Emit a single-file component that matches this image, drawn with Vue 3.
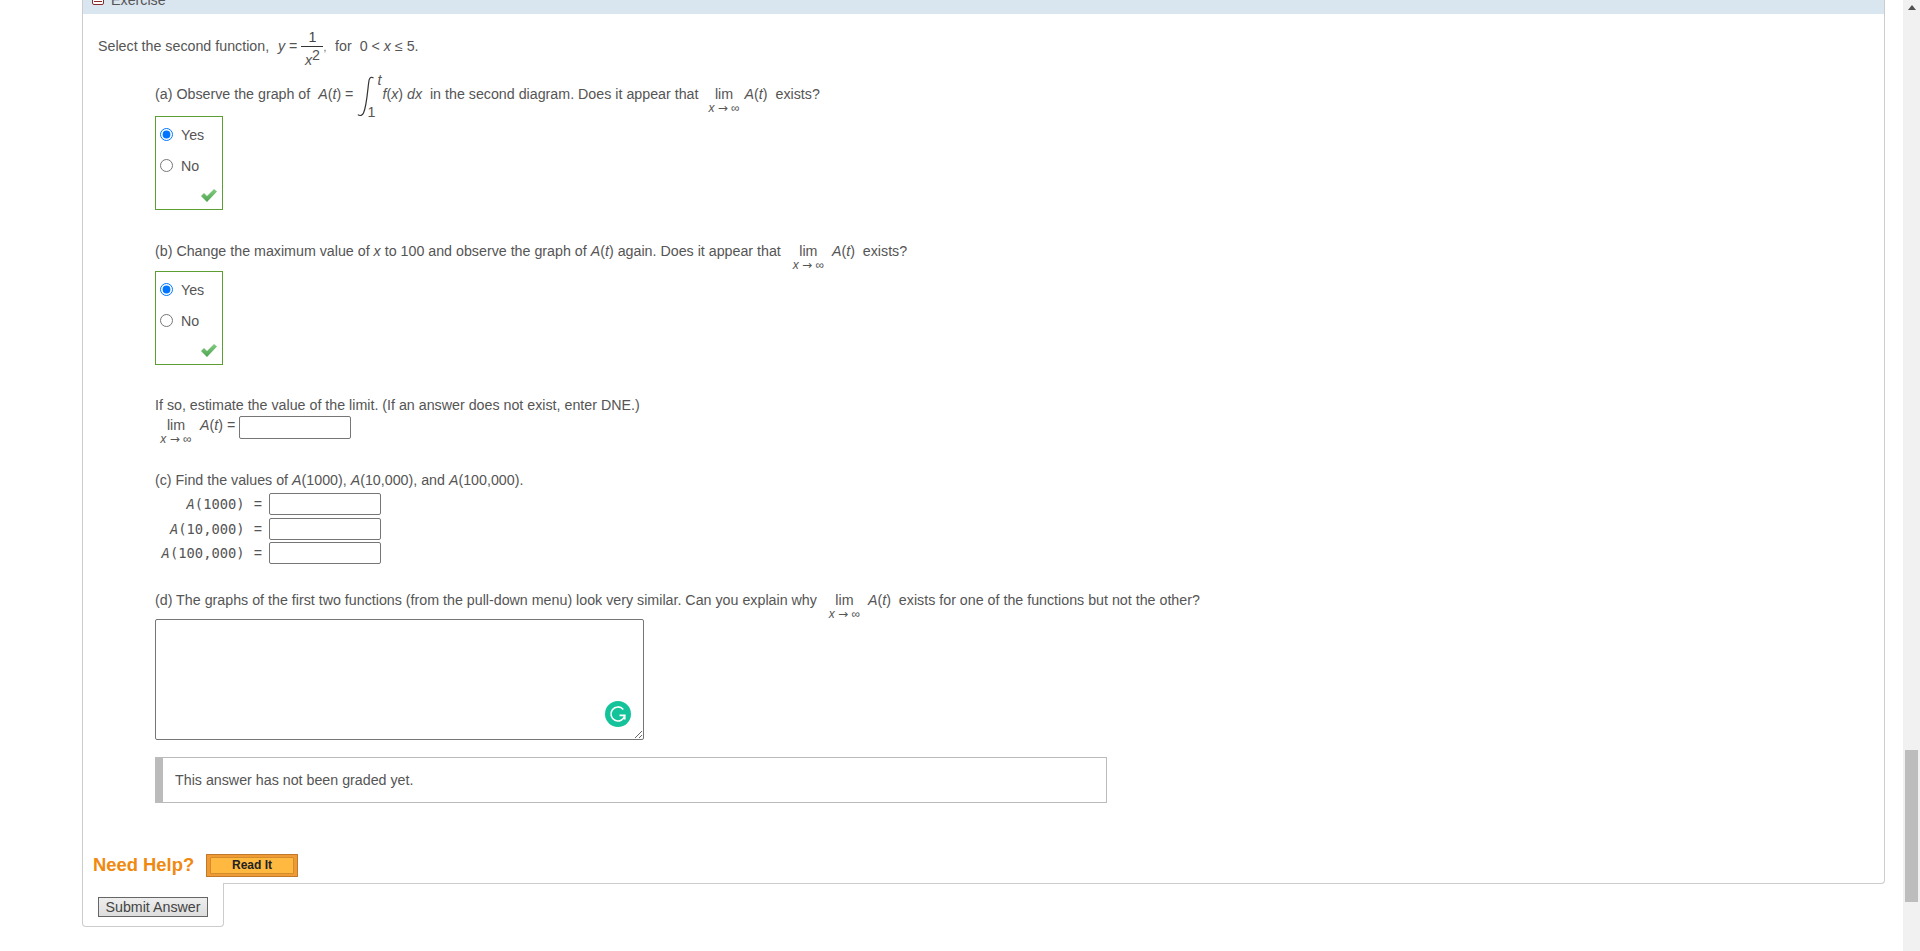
<script setup>
const rows = [
  { label: 'A', arg: '(1000)' },
  { label: 'A', arg: '(10,000)' },
  { label: 'A', arg: '(100,000)' }
]
</script>

<template>
  <div class="shell">
    <main class="page">
      <section class="panel">
        <header class="head">
          <span class="toggle"><i></i></span>
          <span class="head-title">Exercise</span>
        </header>

        <div class="body">
          <p class="intro">
            Select the second function, &nbsp;<em>y</em> =
            <span class="frac"><span class="num">1</span><span class="den"><em>x</em><sup>2</sup></span></span><span class="comma">,</span>
            &nbsp;for &nbsp;0 &lt; <em>x</em> ≤ 5.
          </p>

          <div class="parts">
            <p class="line line-a">
              (a) Observe the graph of &nbsp;<em>A</em>(<em>t</em>) =
              <span class="integral">
                <svg class="int-sign" viewBox="0 0 17 41" width="17" height="41"><path d="M16.5 2.2C15 .6 13 1 12.2 3.6 11 8 10 30 6.5 37 5.400 39.500 3 40.300.8 38.600" fill="none" stroke="#333" stroke-width="1.200" /></svg>
                <em class="int-top">t</em><span class="int-bot">1</span>
              </span>
              <em>f</em>(<em>x</em>) <em>dx</em> &nbsp;in the second diagram. Does it appear that &nbsp;
              <span class="lim"><span>lim</span><small><em>x</em> <span class="arr">→</span> ∞</small></span>
              &nbsp;<em>A</em>(<em>t</em>) &nbsp;exists?
            </p>
            <div class="answer">
              <label class="opt"><input type="radio" name="a" checked /> Yes</label>
              <label class="opt"><input type="radio" name="a" /> No</label>
              <svg class="check" viewBox="0 0 16 14" width="16" height="14">
                <defs><linearGradient id="ga" x1="0" y1="0" x2="0" y2="1"><stop offset="0" stop-color="#86cc82" /><stop offset="1" stop-color="#4ba550" /></linearGradient></defs>
                <path d="M0 8 3 5 6 8 13 1 16 3.500 6 14z" fill="url(#ga)" />
              </svg>
            </div>

            <p class="line line-b">
              (b) Change the maximum value of <em>x</em> to 100 and observe the graph of <em>A</em>(<em>t</em>) again. Does it appear that &nbsp;
              <span class="lim"><span>lim</span><small><em>x</em> <span class="arr">→</span> ∞</small></span>
              &nbsp;<em>A</em>(<em>t</em>) &nbsp;exists?
            </p>
            <div class="answer">
              <label class="opt"><input type="radio" name="b" checked /> Yes</label>
              <label class="opt"><input type="radio" name="b" /> No</label>
              <svg class="check" viewBox="0 0 16 14" width="16" height="14">
                <defs><linearGradient id="gb" x1="0" y1="0" x2="0" y2="1"><stop offset="0" stop-color="#86cc82" /><stop offset="1" stop-color="#4ba550" /></linearGradient></defs>
                <path d="M0 8 3 5 6 8 13 1 16 3.500 6 14z" fill="url(#gb)" />
              </svg>
            </div>

            <p class="line line-so">If so, estimate the value of the limit. (If an answer does not exist, enter DNE.)</p>
            <div class="lim-row">
              <span class="lim"><span>lim</span><small><em>x</em> <span class="arr">→</span> ∞</small></span>
              <span class="lim-expr"><em>A</em>(<em>t</em>) =</span>
              <input class="field" type="text" />
            </div>

            <p class="line line-c">
              (c) Find the values of <em>A</em>(1000), <em>A</em>(10,000), and <em>A</em>(100,000).
            </p>
            <div class="table">
              <div v-for="row in rows" :key="row.arg" class="table-row">
                <span class="mono"><em>{{ row.label }}</em>{{ row.arg }}</span>
                <span class="eq">=</span>
                <input class="field" type="text" />
              </div>
            </div>

            <p class="line line-d">
              (d) The graphs of the first two functions (from the pull-down menu) look very similar. Can you explain why &nbsp;
              <span class="lim"><span>lim</span><small><em>x</em> <span class="arr">→</span> ∞</small></span>
              &nbsp;<em>A</em>(<em>t</em>) &nbsp;exists for one of the functions but not the other?
            </p>
            <div class="area-wrap">
              <textarea class="area"></textarea>
              <svg class="grammarly" viewBox="0 0 26 26" width="26" height="26">
                <circle cx="13" cy="13" r="13" fill="#15c39a" />
                <path d="M18.300 8.400A7 7 0 1 0 19.800 14.400H14.500M19.800 14.400v4" fill="none" stroke="#fff" stroke-width="1.600" />
              </svg>
            </div>
            <div class="note">This answer has not been graded yet.</div>
          </div>

          <div class="help">
            <span class="help-title">Need Help?</span>
            <span class="read"><span>Read It</span></span>
          </div>
        </div>
      </section>
      <div class="tab"><button class="submit" type="button">Submit Answer</button></div>
    </main>
    <aside class="scrollbar">
      <svg class="arrow" viewBox="0 0 8 5" width="8" height="5"><path d="M4 0 8 5H0z" fill="#505050" /></svg>
      <div class="thumb"></div>
    </aside>
  </div>
</template>

<style>
html, body { margin: 0; background: #fff; overflow: hidden; }
</style>

<style scoped>
.shell {
  display: flex;
  height: 951px;
  overflow: hidden;
  font-family: "Liberation Sans", Arial, sans-serif;
  font-size: 14.25px;
  color: #555;
}
.page { flex: 1; min-width: 0; padding-left: 82px; padding-right: 18px; }
.panel {
  height: 884px;
  box-sizing: border-box;
  border: 1px solid #ccc;
  border-top: 0;
  border-radius: 0 0 4px 0;
}
.head {
  height: 14px;
  background: #d9e5ef;
  overflow: hidden;
  display: flex;
  align-items: flex-end;
  gap: 7px;
  padding: 0 0 0 9px;
}
.toggle {
  flex: none;
  box-sizing: border-box;
  width: 12px;
  height: 12px;
  margin-bottom: 9px;
  border: 1px solid #8b2a2a;
  border-radius: 2px;
  background: #fff;
  position: relative;
}
.toggle i { position: absolute; left: 1px; right: 1px; bottom: 2px; height: 1px; background: #8b2a2a; }
.head-title { font-size: 14.25px; line-height: 16px; margin-bottom: 6px; }
.body { padding: 0 0 0 15px; }
p { margin: 0; }
em { font-style: italic; }
.intro { height: 65px; padding-top: 14px; box-sizing: border-box; line-height: 37px; white-space: nowrap; }
.intro > em:first-of-type { margin-left: 1px; }
.frac { display: inline-block; vertical-align: middle; text-align: center; width: 22px; line-height: 18px; }
.num { display: block; height: 17px; line-height: 16px; border-bottom: 1px solid #333; color: #444; }
.den { display: block; height: 19px; line-height: 26px; }
.den sup { font-size: 14.25px; line-height: 0; vertical-align: 5px; }
.comma { font-size: 10px; margin-right: 1px; }
.parts { padding-left: 57px; }
.line { white-space: nowrap; line-height: 16px; }
.line-a { height: 37px; line-height: 30px; box-sizing: border-box; }
.line-a .lim { margin-left: -2px; margin-right: -3px; }
.integral { display: inline-block; position: relative; width: 25px; height: 30px; vertical-align: middle; }
.int-sign { position: absolute; left: 0; top: -4px; }
.int-top { position: absolute; left: 20px; top: -8px; line-height: 16px; }
.int-bot { position: absolute; left: 10px; top: 24px; line-height: 16px; }
.lim { display: inline-flex; flex-direction: column; align-items: center; vertical-align: baseline; line-height: 16px; }
.lim small { font-size: 12px; line-height: 13px; white-space: nowrap; }
.arr { font-family: "DejaVu Sans", sans-serif; font-size: 12px; }
.answer {
  box-sizing: border-box;
  width: 68px;
  height: 94px;
  border: 1px solid #5c9e31;
  position: relative;
  padding-top: 2px;
}
.opt { display: flex; align-items: center; gap: 8px; height: 31px; padding-left: 4px; }
.opt input { margin: 0; width: 13px; height: 13px; }
.check { position: absolute; right: 5px; bottom: 7px; }
.line-b { margin-top: 33px; height: 28px; }
.line-so { margin-top: 32px; height: 19px; }
.lim-row { display: flex; align-items: flex-start; height: 56px; }
.lim-row .lim { width: 34px; padding-top: 1px; margin-left: 4px; }
.lim-expr { margin-left: 7px; margin-right: 4px; padding-top: 1px; line-height: 16px; white-space: nowrap; }
.field {
  box-sizing: border-box;
  width: 112px;
  height: 23px;
  margin: 0;
  border: 1px solid #767676;
  border-radius: 2px;
  background: #fff;
  padding: 0;
}
.line-c { height: 21px; }
.table { display: flex; flex-direction: column; gap: 2.500px; }
.table-row { display: flex; align-items: center; justify-content: flex-end; width: 226px; height: 22px; }
.table-row .field { height: 22px; }
.mono { font-family: "DejaVu Sans Mono", monospace; font-size: 13.800px; }
.eq { margin: 0 7px 0 9px; }
.line-d { margin-top: 28px; height: 27px; }
.area-wrap { position: relative; width: 489px; height: 121px; }
.area {
  display: block;
  box-sizing: border-box;
  width: 489px;
  height: 121px;
  margin: 0;
  padding: 2px;
  border: 1px solid #767676;
  border-radius: 2px;
  background: #fff;
}
.grammarly { position: absolute; right: 13px; bottom: 13px; }
.note {
  box-sizing: border-box;
  width: 952px;
  height: 46px;
  margin-top: 17px;
  border: 1px solid #bbb;
  border-left: 8px solid #bbb;
  padding: 0 0 0 12px;
  line-height: 44px;
  white-space: nowrap;
}
.help { display: flex; align-items: center; margin: 50px 0 0 -5px; height: 24px; }
.help-title { font-size: 18.400px; font-weight: bold; color: #f0890f; width: 113px; white-space: nowrap; }
.read {
  box-sizing: border-box;
  width: 92px;
  height: 23px;
  background: #ee9a35;
  border: 1px solid #c17a2c;
  padding: 2px 3px;
  display: flex;
}
.read span {
  flex: 1;
  border: 1px solid #d58c2a;
  background: #ffb940;
  border-radius: 1px;
  text-align: center;
  font-size: 12px;
  font-weight: bold;
  line-height: 15px;
  color: #222;
}
.tab {
  box-sizing: border-box;
  width: 142px;
  height: 44px;
  margin-top: -1px;
  background: #fff;
  border: 1px solid #ccc;
  border-top: 0;
  border-radius: 0 0 4px 4px;
  padding: 14px 0 0 15px;
  position: relative;
}
.submit {
  display: block;
  box-sizing: border-box;
  width: 110px;
  height: 20px;
  padding: 0;
  margin: 0;
  border: 1px solid #666;
  background: linear-gradient(#eee, #ddd);
  font-family: "Liberation Sans", Arial, sans-serif;
  font-size: 14.250px;
  line-height: 18px;
  color: #444;
}
.scrollbar { flex: none; width: 17px; background: #f1f1f1; position: relative; }
.arrow { position: absolute; left: 5px; top: 5px; }
.thumb { width: 13px; height: 152px; margin: 750px 0 0 2px; background: #bdbdbd; }
</style>
